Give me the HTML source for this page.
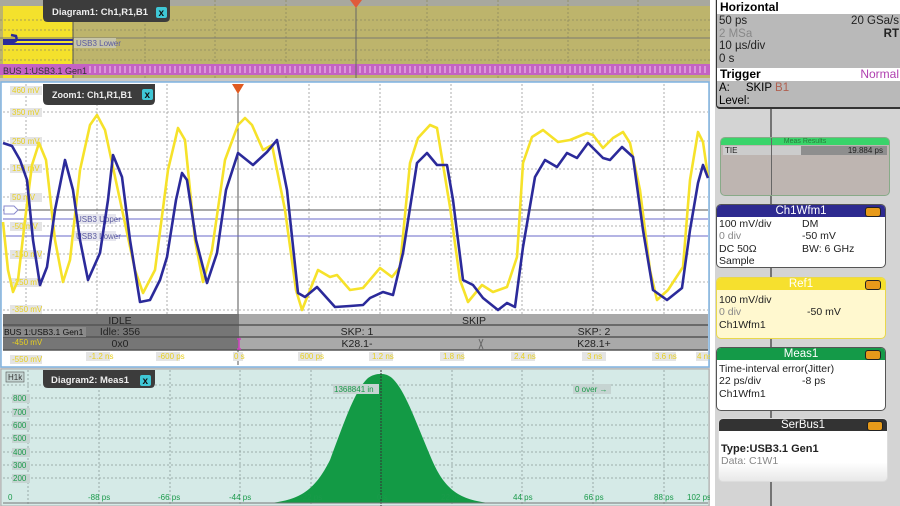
<!DOCTYPE html>
<html><head><meta charset="utf-8"><style>
body{margin:0;width:900px;height:506px;overflow:hidden;background:#d2d2d2;font-family:"Liberation Sans",sans-serif}
svg{position:absolute;left:0;top:0}
.p{position:absolute;font-size:11px;color:#222;line-height:12.5px}
.box{position:absolute;border:1px solid #555;border-radius:5px;background:#fff;overflow:hidden}
.hd{height:12px;text-align:center;font-size:11.5px;line-height:12px;color:#fff;position:relative}
.mn{position:absolute;right:4px;top:2px;width:14px;height:8px;background:#e79a1a;border:1px solid #222;border-radius:3px}
.bd{padding:1px 2px;font-size:10.5px;line-height:12.3px;color:#222}
.g{color:#888}
</style></head><body>
<svg width="900" height="506" viewBox="0 0 900 506" font-family="Liberation Sans, sans-serif">
<!-- Top diagram -->
<rect x="0" y="0" width="710" height="80" fill="#bdb46c"/>
<rect x="3" y="0" width="70" height="78" fill="#f4e12c"/>
<rect x="0" y="0" width="710" height="6" fill="#a8a89e"/>
<g stroke="#8d8a60" stroke-width="0.8" stroke-dasharray="2,2">
<line x1="0" y1="20" x2="710" y2="20"/><line x1="0" y1="30" x2="710" y2="30"/>
<line x1="0" y1="50" x2="710" y2="50"/><line x1="0" y1="60" x2="710" y2="60"/>
<line x1="145" y1="0" x2="145" y2="78"/><line x1="215" y1="0" x2="215" y2="78"/><line x1="286" y1="0" x2="286" y2="78"/><line x1="427" y1="0" x2="427" y2="78"/><line x1="498" y1="0" x2="498" y2="78"/><line x1="568" y1="0" x2="568" y2="78"/><line x1="638" y1="0" x2="638" y2="78"/>
</g>
<line x1="0" y1="38" x2="710" y2="38" stroke="#7a7a70" stroke-width="1"/>
<line x1="73" y1="0" x2="73" y2="78" stroke="#555" stroke-width="1"/>
<line x1="3" y1="40" x2="73" y2="40" stroke="#2b2a9a" stroke-width="2"/>
<line x1="3" y1="44" x2="73" y2="44" stroke="#2b2a9a" stroke-width="2"/>
<path d="M3 42 L12 42 Q18 42 16 36 L11 35" stroke="#2b2a9a" stroke-width="2.5" fill="none"/>
<rect x="74" y="38" width="42" height="10" fill="#c7c5a8"/>
<text x="76" y="46" font-size="8" fill="#5a5aa0">USB3 Lower</text>
<rect x="0" y="64" width="710" height="11" fill="#c462c4"/>
<g stroke="#e9b8e9" stroke-width="1.2">
<path d="M90 66V73M95 66V73M100 66V73M105 66V73M110 66V73M115 66V73M120 66V73M125 66V73M130 66V73M135 66V73M140 66V73M145 66V73M150 66V73M155 66V73M160 66V73M165 66V73M170 66V73M175 66V73M180 66V73M185 66V73M190 66V73M195 66V73M200 66V73M205 66V73M210 66V73M215 66V73M220 66V73M225 66V73M230 66V73M235 66V73M240 66V73M245 66V73M250 66V73M255 66V73M260 66V73M265 66V73M270 66V73M275 66V73M280 66V73M285 66V73M290 66V73M295 66V73M300 66V73M305 66V73M310 66V73M315 66V73M320 66V73M325 66V73M330 66V73M335 66V73M340 66V73M345 66V73M350 66V73M360 66V73M365 66V73M370 66V73M375 66V73M380 66V73M385 66V73M390 66V73M395 66V73M400 66V73M405 66V73M410 66V73M415 66V73M420 66V73M425 66V73M430 66V73M435 66V73M440 66V73M445 66V73M450 66V73M455 66V73M460 66V73M465 66V73M470 66V73M475 66V73M480 66V73M485 66V73M490 66V73M495 66V73M500 66V73M505 66V73M510 66V73M515 66V73M520 66V73M525 66V73M530 66V73M535 66V73M540 66V73M545 66V73M550 66V73M555 66V73M560 66V73M565 66V73M570 66V73M575 66V73M580 66V73M585 66V73M590 66V73M595 66V73M600 66V73M605 66V73M610 66V73M615 66V73M620 66V73M625 66V73M630 66V73M635 66V73M640 66V73M645 66V73M650 66V73M655 66V73M660 66V73M665 66V73M670 66V73M675 66V73M680 66V73M685 66V73M690 66V73M695 66V73M700 66V73M705 66V73"/>
</g>
<text x="3" y="74" font-size="9" fill="#333">BUS 1:USB3.1 Gen1</text>
<line x1="356" y1="0" x2="356" y2="78" stroke="#666" stroke-width="1"/>
<path d="M350 0 L362 0 L356 8 Z" fill="#e05a3a"/>
<path d="M43 0 H170 V17 Q170 22 165 22 H48 Q43 22 43 17 Z" fill="#3c3c3c"/>
<text x="52" y="15" font-size="9" font-weight="bold" fill="#eee" textLength="96" lengthAdjust="spacingAndGlyphs">Diagram1: Ch1,R1,B1</text>
<rect x="156" y="7" width="11" height="11" rx="2" fill="#3fc7d6"/><text x="158.5" y="16" font-size="10" font-weight="bold" fill="#111">x</text>
<rect x="0" y="78" width="710" height="4" fill="#c8c8c8"/>

<!-- Zoom panel -->
<rect x="1" y="82" width="708" height="285" fill="#fff" stroke="#7fb2e0" stroke-width="1.5"/>
<g stroke="#999" stroke-width="0.8" stroke-dasharray="2,2">
<line x1="3" y1="112" x2="708" y2="112"/><line x1="3" y1="141" x2="708" y2="141"/><line x1="3" y1="169" x2="708" y2="169"/><line x1="3" y1="197" x2="708" y2="197"/><line x1="3" y1="226" x2="708" y2="226"/><line x1="3" y1="254" x2="708" y2="254"/><line x1="3" y1="282" x2="708" y2="282"/><line x1="3" y1="310" x2="708" y2="310"/>
<line x1="26" y1="84" x2="26" y2="314"/><line x1="97" y1="84" x2="97" y2="314"/><line x1="167" y1="84" x2="167" y2="314"/><line x1="309" y1="84" x2="309" y2="314"/><line x1="380" y1="84" x2="380" y2="314"/><line x1="451" y1="84" x2="451" y2="314"/><line x1="522" y1="84" x2="522" y2="314"/><line x1="593" y1="84" x2="593" y2="314"/><line x1="664" y1="84" x2="664" y2="314"/>
</g>
<line x1="3" y1="210" x2="708" y2="210" stroke="#555" stroke-width="1"/>
<line x1="238" y1="84" x2="238" y2="365" stroke="#555" stroke-width="1"/>
<line x1="3" y1="219" x2="708" y2="219" stroke="#6a6ac8" stroke-width="1"/>
<line x1="3" y1="236" x2="708" y2="236" stroke="#6a6ac8" stroke-width="1"/>
<g font-size="8" fill="#e8d020">
<rect x="10" y="86" width="32" height="9" fill="#e4e4e4"/><text x="12" y="93">460 mV</text>
<rect x="10" y="108" width="32" height="9" fill="#e4e4e4"/><text x="12" y="115">350 mV</text>
<rect x="10" y="137" width="32" height="9" fill="#e4e4e4"/><text x="12" y="144">250 mV</text>
<rect x="10" y="164" width="32" height="9" fill="#e4e4e4"/><text x="12" y="171">150 mV</text>
<rect x="10" y="193" width="32" height="9" fill="#e4e4e4"/><text x="12" y="200">50 mV</text>
<rect x="10" y="222" width="32" height="9" fill="#e4e4e4"/><text x="12" y="229">-50 mV</text>
<rect x="10" y="250" width="32" height="9" fill="#e4e4e4"/><text x="12" y="257">-150 mV</text>
<rect x="10" y="278" width="32" height="9" fill="#e4e4e4"/><text x="12" y="285">-250 mV</text>
<rect x="10" y="305" width="32" height="9" fill="#e4e4e4"/><text x="12" y="312">-350 mV</text>
</g>
<rect x="74" y="214" width="42" height="10" fill="#e6e6ee"/><text x="76" y="222" font-size="8" fill="#5a5aa0">USB3 Upper</text>
<rect x="74" y="231" width="42" height="10" fill="#e6e6ee"/><text x="76" y="239" font-size="8" fill="#5a5aa0">USB3 Lower</text>
<path d="M4 206 H14 L18 210 L14 214 H4 Z" fill="#fff" stroke="#8888cc"/>
<polyline fill="none" stroke="#f6e22a" stroke-width="2.6" stroke-linejoin="round" points="3,222 8,270 13,292 18,280 25,220 32,165 39,143 46,160 55,240 63,282 70,260 80,170 90,125 97,115 105,130 120,200 135,270 143,293 155,270 168,170 178,128 185,140 195,240 203,282 212,250 225,160 238,125 245,118 252,125 263,150 272,145 285,210 296,290 302,310 310,290 318,270 330,277 337,275 350,290 363,288 380,268 392,277 400,267 410,163 418,138 430,125 437,128 450,207 460,280 468,302 482,285 493,292 507,287 517,257 523,163 532,137 543,130 558,142 570,140 587,133 593,135 603,148 613,138 623,132 630,143 640,190 650,270 657,300 668,290 683,267 690,180 698,132 703,142 708,177"/>
<polyline fill="none" stroke="#2b2a9a" stroke-width="2.6" stroke-linejoin="round" points="3,143 12,146 20,160 27,180 33,240 40,285 47,267 55,210 65,160 73,190 80,240 88,280 100,253 108,200 113,155 122,177 130,240 140,302 150,300 160,280 167,257 176,200 182,173 187,180 196,240 207,283 217,253 226,190 238,153 253,165 267,152 277,140 287,190 298,293 305,297 317,287 335,307 350,306 363,305 370,298 383,292 393,295 403,253 417,163 427,153 437,165 447,165 453,200 463,280 473,285 483,298 498,310 507,303 515,307 523,247 535,177 545,160 557,167 567,153 577,158 588,143 603,158 610,160 622,147 633,157 643,230 653,290 667,300 682,288 690,230 698,183 703,165 708,178"/>
<path d="M232 84 L244 84 L238 94 Z" fill="#e05a20"/>
<path d="M43 84 H155 V100 Q155 105 150 105 H48 Q43 105 43 100 Z" fill="#3c3c3c"/>
<text x="52" y="98" font-size="9" font-weight="bold" fill="#eee" textLength="80" lengthAdjust="spacingAndGlyphs">Zoom1: Ch1,R1,B1</text>
<rect x="142" y="89" width="11" height="11" rx="2" fill="#3fc7d6"/><text x="144.5" y="98" font-size="10" font-weight="bold" fill="#111">x</text>
<!-- bus -->
<rect x="3" y="314" width="705" height="36" fill="#a9a9a9"/>
<rect x="3" y="314" width="236" height="36" fill="#767676"/>
<g stroke="#555" stroke-width="1.5"><line x1="3" y1="325" x2="708" y2="325"/><line x1="3" y1="337" x2="708" y2="337"/><line x1="3" y1="350" x2="708" y2="350"/></g>
<g font-size="10.5" fill="#222" text-anchor="middle">
<text x="120" y="324">IDLE</text><text x="474" y="324">SKIP</text>
<text x="120" y="335">Idle: 356</text><text x="357" y="335">SKP: 1</text><text x="594" y="335">SKP: 2</text>
<text x="120" y="347">0x0</text><text x="357" y="347">K28.1-</text><text x="594" y="347">K28.1+</text>
</g>
<rect x="3" y="327" width="83" height="10" fill="#8a8a8a"/>
<text x="4" y="335" font-size="8.5" fill="#111">BUS 1:USB3.1 Gen1</text>
<text x="12" y="345" font-size="8" fill="#e8d020">-450 mV</text>
<path d="M237 339 h4 M237 349 h4 M239 339 v10" stroke="#d040c0" stroke-width="1.5"/>
<path d="M479 339 l2 5 l-2 5 M483 339 l-2 5 l2 5" stroke="#666" fill="none"/>
<g font-size="8" fill="#e8d020">
<rect x="10" y="355" width="32" height="9" fill="#e4e4e4"/><text x="12" y="362">-550 mV</text>
<rect x="86" y="352" width="24" height="9" fill="#e4e4e4"/><text x="89" y="359">-1.2 ns</text>
<rect x="156" y="352" width="24" height="9" fill="#e4e4e4"/><text x="158" y="359">-600 ps</text>
<rect x="233" y="352" width="10" height="9" fill="#e4e4e4"/><text x="234" y="359">0 s</text>
<rect x="298" y="352" width="24" height="9" fill="#e4e4e4"/><text x="300" y="359">600 ps</text>
<rect x="369" y="352" width="24" height="9" fill="#e4e4e4"/><text x="372" y="359">1.2 ns</text>
<rect x="440" y="352" width="24" height="9" fill="#e4e4e4"/><text x="443" y="359">1.8 ns</text>
<rect x="511" y="352" width="24" height="9" fill="#e4e4e4"/><text x="514" y="359">2.4 ns</text>
<rect x="582" y="352" width="24" height="9" fill="#e4e4e4"/><text x="587" y="359">3 ns</text>
<rect x="652" y="352" width="24" height="9" fill="#e4e4e4"/><text x="655" y="359">3.6 ns</text>
<rect x="696" y="352" width="12" height="9" fill="#e4e4e4"/><text x="697" y="359">4 ns</text>
</g>

<!-- Histogram -->
<rect x="1" y="369" width="708" height="137" fill="#d5eae7" stroke="#aaa" stroke-width="1"/>
<g stroke="#8a9a98" stroke-width="0.8" stroke-dasharray="2,2">
<line x1="3" y1="398" x2="708" y2="398"/><line x1="3" y1="412" x2="708" y2="412"/><line x1="3" y1="425" x2="708" y2="425"/><line x1="3" y1="438" x2="708" y2="438"/><line x1="3" y1="452" x2="708" y2="452"/><line x1="3" y1="465" x2="708" y2="465"/><line x1="3" y1="478" x2="708" y2="478"/><line x1="3" y1="385" x2="708" y2="385"/>
<line x1="28" y1="370" x2="28" y2="506"/><line x1="99" y1="370" x2="99" y2="506"/><line x1="170" y1="370" x2="170" y2="506"/><line x1="240" y1="370" x2="240" y2="506"/><line x1="311" y1="370" x2="311" y2="506"/><line x1="452" y1="370" x2="452" y2="506"/><line x1="522" y1="370" x2="522" y2="506"/><line x1="593" y1="370" x2="593" y2="506"/><line x1="664" y1="370" x2="664" y2="506"/>
</g>
<path d="M270 503 C300 500 315 490 330 460 C345 420 355 390 368 378 C375 373 385 372 392 378 C405 390 415 420 432 460 C445 490 460 500 490 503 Z" fill="#139a45"/>
<line x1="381" y1="370" x2="381" y2="506" stroke="#333" stroke-width="1" stroke-dasharray="2,1"/>
<line x1="3" y1="503" x2="708" y2="503" stroke="#777" stroke-width="1"/>
<g font-size="8" fill="#1a9a4a">
<rect x="6" y="372" width="18" height="10" fill="#c4d4d2" stroke="#555" stroke-width="0.6"/><text x="8" y="380" fill="#333">H1k</text>
<rect x="12" y="394" width="18" height="9" fill="#c6d4d2"/><text x="13" y="401">800</text>
<rect x="12" y="408" width="18" height="9" fill="#c6d4d2"/><text x="13" y="415">700</text>
<rect x="12" y="421" width="18" height="9" fill="#c6d4d2"/><text x="13" y="428">600</text>
<rect x="12" y="434" width="18" height="9" fill="#c6d4d2"/><text x="13" y="441">500</text>
<rect x="12" y="448" width="18" height="9" fill="#c6d4d2"/><text x="13" y="455">400</text>
<rect x="12" y="461" width="18" height="9" fill="#c6d4d2"/><text x="13" y="468">300</text>
<rect x="12" y="474" width="18" height="9" fill="#c6d4d2"/><text x="13" y="481">200</text>
<text x="8" y="500">0</text>
<rect x="333" y="384" width="46" height="10" fill="#c6d4d2"/><text x="334" y="392">1368841 in</text>
<rect x="573" y="384" width="38" height="10" fill="#c6d4d2"/><text x="575" y="392">0 over →</text>
<text x="88" y="500">-88 ps</text><text x="158" y="500">-66 ps</text><text x="229" y="500">-44 ps</text><text x="300" y="500">-22 ps</text><text x="377" y="500">0 s</text><text x="441" y="500">22 ps</text><text x="513" y="500">44 ps</text><text x="584" y="500">66 ps</text><text x="654" y="500">88 ps</text><text x="687" y="500">102 ps</text>
</g>
<path d="M43 370 H155 V383 Q155 388 150 388 H48 Q43 388 43 383 Z" fill="#3c3c3c"/>
<text x="51" y="383" font-size="9" font-weight="bold" fill="#eee" textLength="78" lengthAdjust="spacingAndGlyphs">Diagram2: Meas1</text>
<rect x="140" y="375" width="11" height="11" rx="2" fill="#3fc7d6"/><text x="142.5" y="384" font-size="10" font-weight="bold" fill="#111">x</text>

<!-- right panel -->
<rect x="710" y="0" width="190" height="506" fill="#d4d4d4"/>
<rect x="710" y="0" width="5" height="506" fill="#fff"/>
<line x1="771" y1="0" x2="771" y2="506" stroke="#555" stroke-width="1.5"/>
</svg>

<div style="position:absolute;left:716px;top:0;width:184px;height:107px;background:#b9b9b9;border-bottom:2px solid #333;border-left:1px solid #333;border-bottom-left-radius:4px">
 <div style="background:#fff;height:14px;font-weight:bold;font-size:12px;padding-left:3px;line-height:14px">Horizontal</div>
 <div class="p" style="position:relative;padding:1px 2px;font-size:11.5px;line-height:12.7px">
  <div>50 ps<span style="float:right">20 GSa/s</span></div>
  <div class="g">2 MSa<span style="float:right;color:#222;font-weight:bold">RT</span></div>
  <div>10 µs/div</div><div>0 s</div>
 </div>
 <div style="background:#fff;height:13px;font-weight:bold;font-size:12px;padding-left:3px;line-height:13px;margin-top:1px">Trigger<span style="float:right;font-weight:normal;color:#b040b0;padding-right:2px">Normal</span></div>
 <div style="font-size:11.5px;padding:1px 2px;line-height:13px">A:&nbsp;&nbsp;&nbsp;&nbsp;&nbsp;SKIP <span style="color:#b06050">B1</span><br>Level:</div>
</div>

<div style="position:absolute;left:720px;top:137px;width:168px;height:57px;background:#beb5b1;border:1px solid #8a8;border-radius:5px;overflow:hidden">
 <div style="height:7px;background:#39d46a;font-size:7px;text-align:center;color:#2a7a3a;line-height:7px">Meas Results</div>
 <div style="margin:1px 2px;height:9px;background:#8e8e8e;font-size:8px;line-height:9px;color:#222"><span style="background:#ccc;display:inline-block;width:76px;padding-left:2px">TIE</span><span style="float:right;padding-right:4px">19.884 ps</span></div>
 <div style="position:absolute;left:50px;top:0;width:1px;height:57px;background:#666"></div>
</div>

<div class="box" style="left:716px;top:204px;width:168px;height:62px">
 <div class="hd" style="background:#2e2a90">Ch1Wfm1<span class="mn"></span></div>
 <div class="bd"><div>100 mV/div<span style="position:absolute;left:85px">DM</span></div><div class="g">0 div<span style="position:absolute;left:85px;color:#222">-50 mV</span></div><div>DC 50Ω<span style="position:absolute;left:85px">BW: 6 GHz</span></div><div>Sample</div></div>
</div>
<div class="box" style="left:716px;top:277px;width:168px;height:60px;background:#fff8cf;border-color:#e9d84a">
 <div class="hd" style="background:#f6e02e">Ref1<span class="mn"></span></div>
 <div class="bd" style="padding-top:4px"><div>100 mV/div</div><div class="g">0 div<span style="position:absolute;left:90px;color:#222">-50 mV</span></div><div>Ch1Wfm1</div></div>
</div>
<div class="box" style="left:716px;top:347px;width:168px;height:62px">
 <div class="hd" style="background:#149a48">Meas1<span class="mn"></span></div>
 <div class="bd" style="padding-top:3px"><div>Time-interval error(Jitter)</div><div>22 ps/div<span style="position:absolute;left:85px">-8 ps</span></div><div>Ch1Wfm1</div></div>
</div>
<div class="box" style="left:718px;top:418px;width:168px;height:62px;border-color:#ddd;background:linear-gradient(#fff 70%,#e8e8e8)">
 <div class="hd" style="background:#333">SerBus1<span class="mn"></span></div>
 <div class="bd" style="padding-top:12px"><div style="font-weight:bold;font-size:11px">Type:USB3.1 Gen1</div><div class="g">Data: C1W1</div></div>
</div>
</body></html>
